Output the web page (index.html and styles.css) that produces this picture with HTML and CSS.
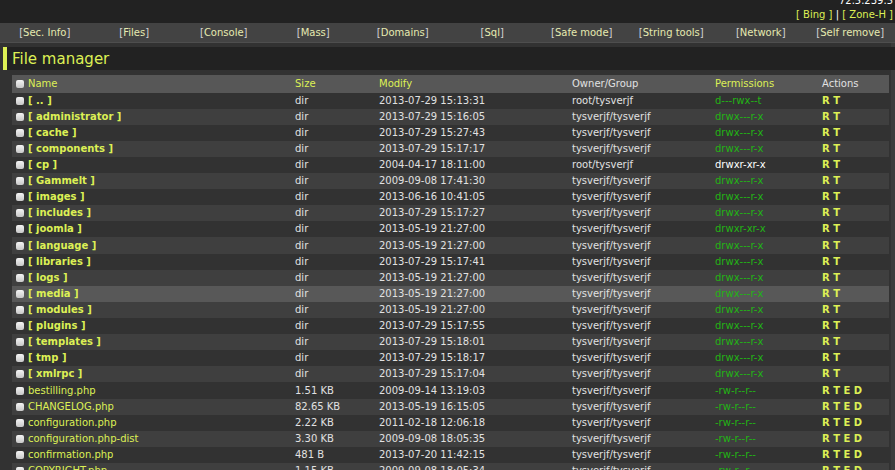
FILE: index.html
```html
<!DOCTYPE html>
<html>
<head>
<meta charset="utf-8">
<link rel="stylesheet" href="styles.css">
</head>
<body>
<div class="top">
  <div class="line ip">72.5.239.5</div>
  <div class="line"><a class="lk" href="#">[ Bing ]</a> | <a class="lk" href="#">[ Zone-H ]</a></div>
</div>
<div class="menu">
  <div class="mi">[<a href="#">Sec. Info</a>]</div>
  <div class="mi">[<a href="#">Files</a>]</div>
  <div class="mi">[<a href="#">Console</a>]</div>
  <div class="mi">[<a href="#">Mass</a>]</div>
  <div class="mi">[<a href="#">Domains</a>]</div>
  <div class="mi">[<a href="#">Sql</a>]</div>
  <div class="mi">[<a href="#">Safe mode</a>]</div>
  <div class="mi">[<a href="#">String tools</a>]</div>
  <div class="mi">[<a href="#">Network</a>]</div>
  <div class="mi">[<a href="#">Self remove</a>]</div>
</div>
<div class="main">
  <h1>File manager</h1>
  <div class="content">
    <table class="files">
      <colgroup>
        <col class="c1"><col class="c2"><col class="c3"><col class="c4"><col class="c5"><col class="c6">
      </colgroup>
      <thead>
        <tr>
          <th><span class="cb"></span><a href="#">Name</a></th>
          <th><a href="#">Size</a></th>
          <th><a href="#">Modify</a></th>
          <th>Owner/Group</th>
          <th><a href="#">Permissions</a></th>
          <th>Actions</th>
        </tr>
      </thead>
      <tbody>
        <tr><td><span class="cb"></span><a class="dir" href="#">[ .. ]</a></td><td>dir</td><td>2013-07-29 15:13:31</td><td>root/tysverjf</td><td class="pg">d---rwx--t</td><td class="act">R T</td></tr>
        <tr class="l1"><td><span class="cb"></span><a class="dir" href="#">[ administrator ]</a></td><td>dir</td><td>2013-07-29 15:16:05</td><td>tysverjf/tysverjf</td><td class="pg">drwx---r-x</td><td class="act">R T</td></tr>
        <tr><td><span class="cb"></span><a class="dir" href="#">[ cache ]</a></td><td>dir</td><td>2013-07-29 15:27:43</td><td>tysverjf/tysverjf</td><td class="pg">drwx---r-x</td><td class="act">R T</td></tr>
        <tr class="l1"><td><span class="cb"></span><a class="dir" href="#">[ components ]</a></td><td>dir</td><td>2013-07-29 15:17:17</td><td>tysverjf/tysverjf</td><td class="pg">drwx---r-x</td><td class="act">R T</td></tr>
        <tr><td><span class="cb"></span><a class="dir" href="#">[ cp ]</a></td><td>dir</td><td>2004-04-17 18:11:00</td><td>root/tysverjf</td><td class="pw">drwxr-xr-x</td><td class="act">R T</td></tr>
        <tr class="l1"><td><span class="cb"></span><a class="dir" href="#">[ Gammelt ]</a></td><td>dir</td><td>2009-09-08 17:41:30</td><td>tysverjf/tysverjf</td><td class="pg">drwx---r-x</td><td class="act">R T</td></tr>
        <tr><td><span class="cb"></span><a class="dir" href="#">[ images ]</a></td><td>dir</td><td>2013-06-16 10:41:05</td><td>tysverjf/tysverjf</td><td class="pg">drwx---r-x</td><td class="act">R T</td></tr>
        <tr class="l1"><td><span class="cb"></span><a class="dir" href="#">[ includes ]</a></td><td>dir</td><td>2013-07-29 15:17:27</td><td>tysverjf/tysverjf</td><td class="pg">drwx---r-x</td><td class="act">R T</td></tr>
        <tr><td><span class="cb"></span><a class="dir" href="#">[ joomla ]</a></td><td>dir</td><td>2013-05-19 21:27:00</td><td>tysverjf/tysverjf</td><td class="pg">drwxr-xr-x</td><td class="act">R T</td></tr>
        <tr class="l1"><td><span class="cb"></span><a class="dir" href="#">[ language ]</a></td><td>dir</td><td>2013-05-19 21:27:00</td><td>tysverjf/tysverjf</td><td class="pg">drwx---r-x</td><td class="act">R T</td></tr>
        <tr><td><span class="cb"></span><a class="dir" href="#">[ libraries ]</a></td><td>dir</td><td>2013-07-29 15:17:41</td><td>tysverjf/tysverjf</td><td class="pg">drwx---r-x</td><td class="act">R T</td></tr>
        <tr class="l1"><td><span class="cb"></span><a class="dir" href="#">[ logs ]</a></td><td>dir</td><td>2013-05-19 21:27:00</td><td>tysverjf/tysverjf</td><td class="pg">drwx---r-x</td><td class="act">R T</td></tr>
        <tr class="hov"><td><span class="cb"></span><a class="dir" href="#">[ media ]</a></td><td>dir</td><td>2013-05-19 21:27:00</td><td>tysverjf/tysverjf</td><td class="pg">drwx---r-x</td><td class="act">R T</td></tr>
        <tr class="l1"><td><span class="cb"></span><a class="dir" href="#">[ modules ]</a></td><td>dir</td><td>2013-05-19 21:27:00</td><td>tysverjf/tysverjf</td><td class="pg">drwx---r-x</td><td class="act">R T</td></tr>
        <tr><td><span class="cb"></span><a class="dir" href="#">[ plugins ]</a></td><td>dir</td><td>2013-07-29 15:17:55</td><td>tysverjf/tysverjf</td><td class="pg">drwx---r-x</td><td class="act">R T</td></tr>
        <tr class="l1"><td><span class="cb"></span><a class="dir" href="#">[ templates ]</a></td><td>dir</td><td>2013-07-29 15:18:01</td><td>tysverjf/tysverjf</td><td class="pg">drwx---r-x</td><td class="act">R T</td></tr>
        <tr><td><span class="cb"></span><a class="dir" href="#">[ tmp ]</a></td><td>dir</td><td>2013-07-29 15:18:17</td><td>tysverjf/tysverjf</td><td class="pg">drwx---r-x</td><td class="act">R T</td></tr>
        <tr class="l1"><td><span class="cb"></span><a class="dir" href="#">[ xmlrpc ]</a></td><td>dir</td><td>2013-07-29 15:17:04</td><td>tysverjf/tysverjf</td><td class="pg">drwx---r-x</td><td class="act">R T</td></tr>
        <tr><td><span class="cb"></span><a href="#">bestilling.php</a></td><td>1.51 KB</td><td>2009-09-14 13:19:03</td><td>tysverjf/tysverjf</td><td class="pg">-rw-r--r--</td><td class="act">R T E D</td></tr>
        <tr class="l1"><td><span class="cb"></span><a href="#">CHANGELOG.php</a></td><td>82.65 KB</td><td>2013-05-19 16:15:05</td><td>tysverjf/tysverjf</td><td class="pg">-rw-r--r--</td><td class="act">R T E D</td></tr>
        <tr><td><span class="cb"></span><a href="#">configuration.php</a></td><td>2.22 KB</td><td>2011-02-18 12:06:18</td><td>tysverjf/tysverjf</td><td class="pg">-rw-r--r--</td><td class="act">R T E D</td></tr>
        <tr class="l1"><td><span class="cb"></span><a href="#">configuration.php-dist</a></td><td>3.30 KB</td><td>2009-09-08 18:05:35</td><td>tysverjf/tysverjf</td><td class="pg">-rw-r--r--</td><td class="act">R T E D</td></tr>
        <tr><td><span class="cb"></span><a href="#">confirmation.php</a></td><td>481 B</td><td>2013-07-20 11:42:15</td><td>tysverjf/tysverjf</td><td class="pg">-rw-r--r--</td><td class="act">R T E D</td></tr>
        <tr class="l1"><td><span class="cb"></span><a href="#">COPYRIGHT.php</a></td><td>1.15 KB</td><td>2009-09-08 18:05:34</td><td>tysverjf/tysverjf</td><td class="pg">-rw-r--r--</td><td class="act">R T E D</td></tr>
      </tbody>
    </table>
  </div>
</div>
</body>
</html>
```
FILE: styles.css
```css
html, body {
  margin: 0;
  padding: 0;
  height: 470px;
  overflow: hidden;
}
body {
  background: #3b3b3b;
  color: #e1e1e1;
  font-family: "DejaVu Sans", Verdana, sans-serif;
  font-size: 10px;
}
a {
  color: #ddf055;
  text-decoration: none;
}
.top {
  background: #222;
  height: 23px;
  display: flex;
  flex-direction: column;
  justify-content: flex-end;
  align-items: flex-end;
  overflow: hidden;
  padding-right: 2px;
  padding-bottom: 1px;
  box-sizing: border-box;
  color: #fff;
}
.top .line {
  line-height: 14px;
  white-space: nowrap;
}
.top .lk {
  color: #ddf055;
}
.menu {
  display: flex;
  height: 19px;
  background: #434343;
  border-bottom: 1px solid #4e4e4e;
  color: #d4d4d4;
  line-height: 20px;
}
.mi {
  flex: 1 1 0;
  text-align: center;
  white-space: nowrap;
}
.mi a {
  color: #e6eab0;
}
.main {
  background: linear-gradient(to left, #3b3b3b 4px, #323232 4px);
  padding: 4px 0 0 3px;
}
h1 {
  margin: 0;
  background: #222;
  border-left: 4px solid #ddf055;
  padding: 0 5px;
  height: 23px;
  line-height: 25px;
  overflow: hidden;
  font-size: 15px;
  font-weight: normal;
  color: #ddf055;
}
.content {
  background: #323232;
  margin: 0 4px 0 4px;
  padding: 5px 2px 0 5px;
}
.files {
  width: 100%;
  table-layout: fixed;
  border-collapse: collapse;
  border-spacing: 0;
}
.c1 { width: 281px; }
.c2 { width: 84px; }
.c3 { width: 193px; }
.c4 { width: 143px; }
.c5 { width: 107px; }
.c6 { width: 69px; }
.files th {
  background: #575757;
  text-align: left;
  font-weight: normal;
  height: 17.5px;
  padding: 0 2px;
  line-height: 12px;
  vertical-align: middle;
  white-space: nowrap;
}
.files td {
  height: 16.12px;
  padding: 0 2px;
  line-height: 12px;
  vertical-align: middle;
  white-space: nowrap;
  overflow: hidden;
}
.files th:first-child,
.files td:first-child {
  padding-left: 4px;
}
.files tr.l1 td {
  background: #3f3f3f;
}
.files tr.hov td {
  background: #585858;
}
.cb {
  display: inline-block;
  width: 8px;
  height: 8px;
  border-radius: 2px;
  background: linear-gradient(#f4f4f4, #c8c8c8);
  margin-right: 4px;
  vertical-align: -1px;
}
.dir {
  font-weight: bold;
}
.pg {
  color: #22b415;
}
.pw {
  color: #ffffff;
}
.act {
  color: #ddf055;
  font-weight: bold;
}
```
